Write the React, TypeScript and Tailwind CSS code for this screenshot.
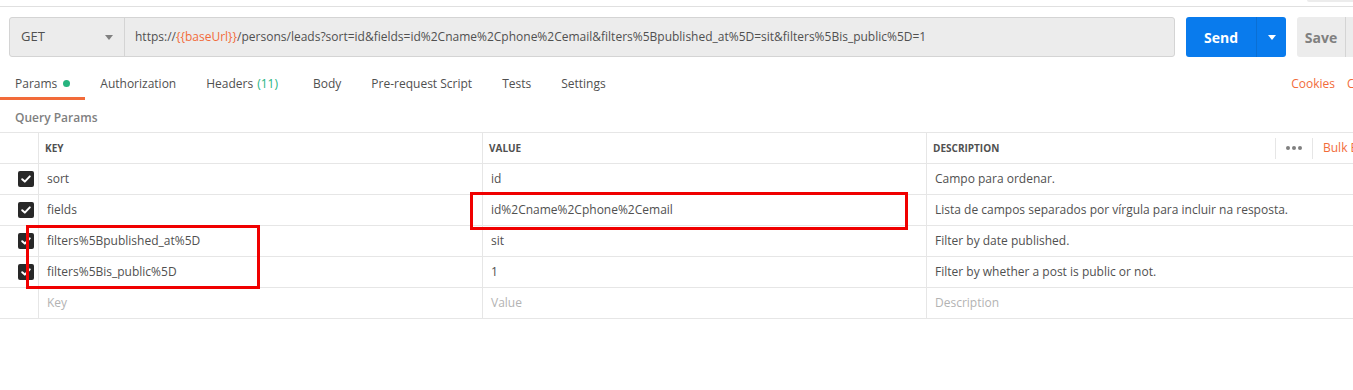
type Row = {
  key: string;
  value: string;
  description: string;
};

const rows: Row[] = [
  { key: 'sort', value: 'id', description: 'Campo para ordenar.' },
  {
    key: 'fields',
    value: 'id%2Cname%2Cphone%2Cemail',
    description: 'Lista de campos separados por vírgula para incluir na resposta.',
  },
  { key: 'filters%5Bpublished_at%5D', value: 'sit', description: 'Filter by date published.' },
  { key: 'filters%5Bis_public%5D', value: '1', description: 'Filter by whether a post is public or not.' },
];

const tabs = ['Authorization', 'Headers', 'Body', 'Pre-request Script', 'Tests', 'Settings'];

const Check = () => (
  <span className="flex h-4 w-4 items-center justify-center rounded-[2px] bg-[#282828]">
    <svg width="12" height="12" viewBox="0 0 12 12" fill="none">
      <path d="M2.2 6.2 L4.8 8.6 L9.8 3.4" stroke="white" strokeWidth="2" strokeLinecap="round" strokeLinejoin="round" />
    </svg>
  </span>
);

const App = () => {
  return (
    <div className="relative h-[390px] w-[1353px] overflow-hidden bg-white font-['Open_Sans',sans-serif] text-[12px] text-[#505050]">
      {/* thin bar above */}
      <div className="flex h-[7px] border-b border-[#e0e0e0]">
        <div className="ml-auto h-[2px] w-[46px] rounded-bl-[3px] bg-[#ececec]" />
      </div>

      {/* url bar */}
      <div className="mt-[10px] flex h-[40px] items-stretch pl-[9px]">
        <div className="flex flex-1 rounded-[3px] border border-[#d4d4d4] bg-[#ececec]">
          <div className="flex w-[115px] items-center justify-between border-r border-[#d4d4d4] px-[11px] text-[13px] text-[#505050]">
            <span>GET</span>
            <svg width="8" height="5" viewBox="0 0 8 5">
              <path d="M0 0 H8 L4 5 Z" fill="#808080" />
            </svg>
          </div>
          <div className="flex items-center whitespace-nowrap pl-[10px] text-[12px] text-[#505050]">
            https://<span className="text-[#f26b3a]">{'{{baseUrl}}'}</span>
            /persons/leads?sort=id&amp;fields=id%2Cname%2Cphone%2Cemail&amp;filters%5Bpublished_at%5D=sit&amp;filters%5Bis_public%5D=1
          </div>
        </div>
        <div className="ml-[11px] flex w-[100px] rounded-[3px] bg-[#097bed] text-white">
          <div className="flex w-[70px] items-center justify-center text-[14px] font-bold">Send</div>
          <div className="flex flex-1 items-center justify-center border-l border-[#0a6fd4]">
            <svg width="8" height="5" viewBox="0 0 8 5">
              <path d="M0 0 H8 L4 5 Z" fill="white" />
            </svg>
          </div>
        </div>
        <div className="ml-[11px] flex w-[56px] rounded-l-[3px] bg-[#ececec] text-[#808080]">
          <div className="flex w-[49px] items-center justify-center border-r border-[#d4d4d4] text-[14px] font-bold">Save</div>
        </div>
      </div>

      {/* tabs */}
      <div className="mt-[14px] flex h-[29px] items-stretch">
        <div className="flex items-center border-b-[3px] border-[#f26b3a] px-[15px] pb-[1px]">
          <span className="text-[#505050]">Params</span>
          <span className="ml-[6px] h-[7px] w-[7px] rounded-full bg-[#26b47f]" />
        </div>
        {tabs.map((t) => (
          <div
            key={t}
            className={t === 'Headers' ? 'flex items-center pb-[4px] pl-[15px] pr-[20px]' : 'flex items-center px-[15px] pb-[4px]'}
          >
            {t}
            {t === 'Headers' && <span className="ml-[4px] text-[#26b47f]">(11)</span>}
          </div>
        ))}
        <div className="ml-auto flex items-center gap-[12px] pb-[4px] text-[#f26b3a]">
          <span>Cookies</span>
          <span className="w-[6px] overflow-hidden">Code</span>
        </div>
      </div>

      {/* query params */}
      <div className="flex h-[32px] items-center pl-[15px] pt-[4px] text-[12px] font-semibold text-[#808080]">Query Params</div>

      {/* table */}
      <div className="border-t border-[#e6e6e6]">
        <div className="grid h-[31px] grid-cols-[39px_444px_444px_1fr] border-b border-[#e6e6e6]">
          <div className="border-r border-[#e6e6e6]" />
          <div className="flex items-center border-r border-[#e6e6e6] pl-[6px] text-[10px] font-bold">KEY</div>
          <div className="flex items-center border-r border-[#e6e6e6] pl-[6px] text-[10px] font-bold">VALUE</div>
          <div className="flex items-center pl-[6px] text-[10px] font-bold">
            <span>DESCRIPTION</span>
            <div className="ml-auto flex h-[21px] items-center border-l border-[#e6e6e6] px-[10px]">
              <span className="flex gap-[2px]">
                <span className="h-[4px] w-[4px] rounded-full bg-[#808080]" />
                <span className="h-[4px] w-[4px] rounded-full bg-[#808080]" />
                <span className="h-[4px] w-[4px] rounded-full bg-[#808080]" />
              </span>
            </div>
            <div className="flex h-[21px] w-[41px] items-center overflow-hidden whitespace-nowrap border-l border-[#e6e6e6] pl-[10px] text-[12px] font-normal text-[#f26b3a]">
              Bulk Edit
            </div>
          </div>
        </div>
        {rows.map((r) => (
          <div key={r.key} className="grid h-[31px] grid-cols-[39px_444px_444px_1fr] border-b border-[#e6e6e6]">
            <div className="flex items-center justify-end border-r border-[#e6e6e6] pr-[4px]">
              <Check />
            </div>
            <div className="flex items-center border-r border-[#e6e6e6] pl-[8px]">{r.key}</div>
            <div className="flex items-center border-r border-[#e6e6e6] pl-[8px]">{r.value}</div>
            <div className="flex items-center pl-[8px]">{r.description}</div>
          </div>
        ))}
        <div className="grid h-[31px] grid-cols-[39px_444px_444px_1fr] border-b border-[#e6e6e6] text-[#b3b3b3]">
          <div className="border-r border-[#e6e6e6]" />
          <div className="flex items-center border-r border-[#e6e6e6] pl-[8px]">Key</div>
          <div className="flex items-center border-r border-[#e6e6e6] pl-[8px]">Value</div>
          <div className="flex items-center pl-[8px]">Description</div>
        </div>
      </div>

      {/* red highlight boxes */}
      <div className="pointer-events-none absolute left-[26px] top-[225px] h-[64px] w-[234px] border-[3px] border-[#f00000]" />
      <div className="pointer-events-none absolute left-[470px] top-[192px] h-[38px] w-[438px] border-[3px] border-[#f00000]" />
    </div>
  );
};

export default App;
